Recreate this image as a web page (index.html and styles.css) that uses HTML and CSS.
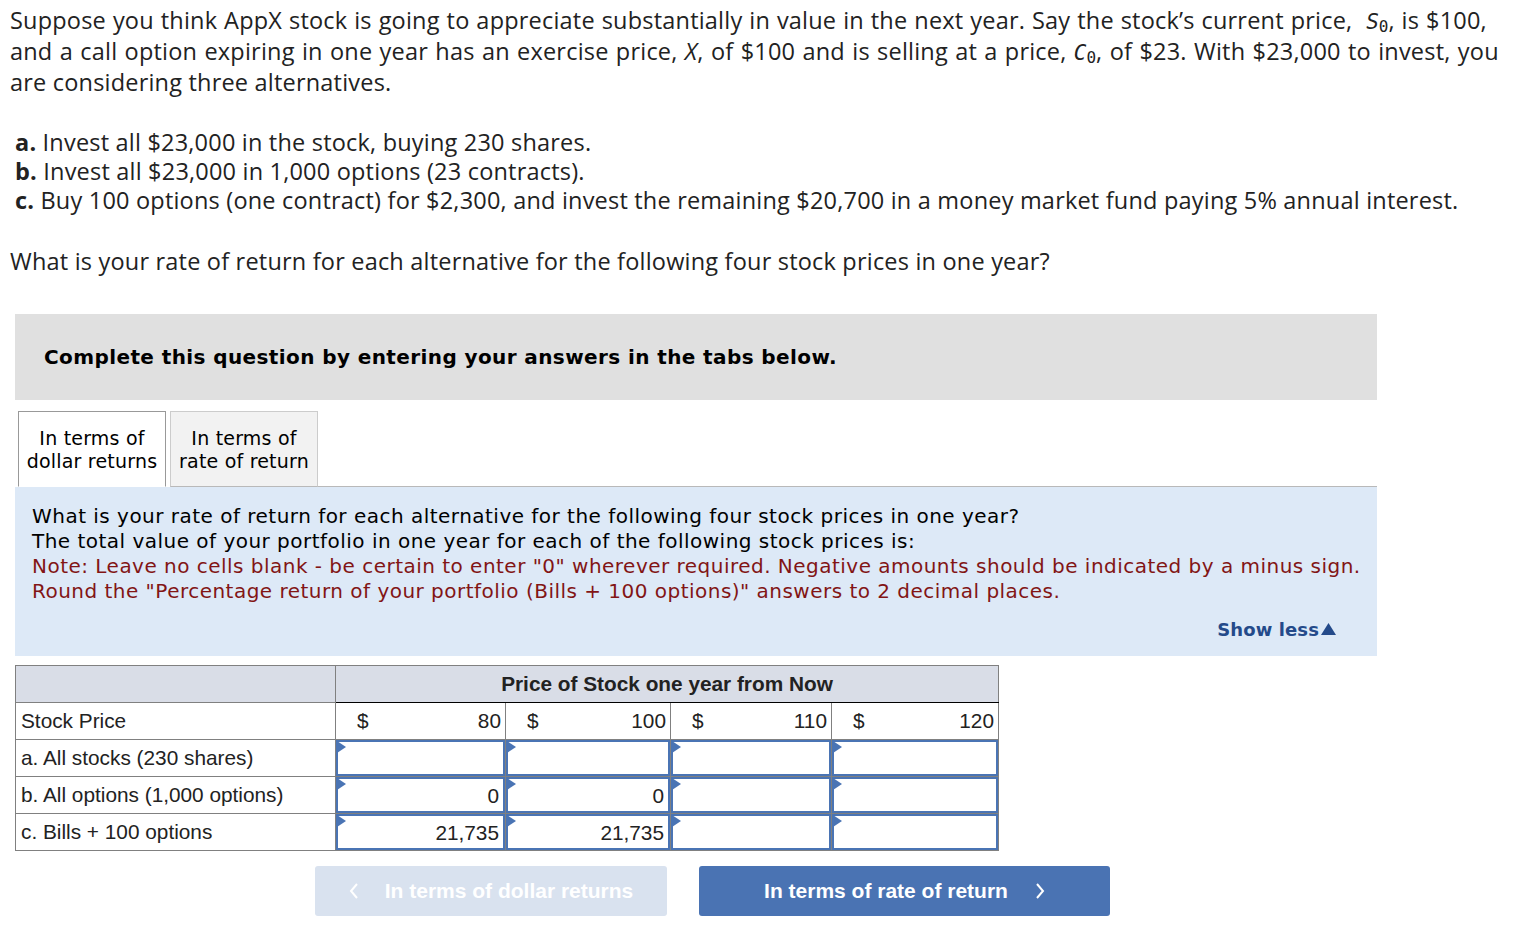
FILE: index.html
```html
<!DOCTYPE html>
<html>
<head>
<meta charset="utf-8">
<link rel="stylesheet" href="styles.css">
</head>
<body>
<div class="page">
  <div class="intro">
    <div class="line">Suppose you think AppX stock is going to appreciate substantially in value in the next year. Say the stock’s current price, &nbsp;<span class="var">S<span class="sub">0</span></span>, is $100,</div>
    <div class="line wide">and a call option expiring in one year has an exercise price, <i>X</i>, of $100 and is selling at a price, <span class="var">C<span class="sub">0</span></span>, of $23. With $23,000 to invest, you</div>
    <div class="line">are considering three alternatives.</div>
  </div>
  <div class="alts">
    <div class="line"><b>a.</b> Invest all $23,000 in the stock, buying 230 shares.</div>
    <div class="line"><b>b.</b> Invest all $23,000 in 1,000 options (23 contracts).</div>
    <div class="line"><b>c.</b> Buy 100 options (one contract) for $2,300, and invest the remaining $20,700 in a money market fund paying 5% annual interest.</div>
  </div>
  <p class="question">What is your rate of return for each alternative for the following four stock prices in one year?</p>

  <div class="banner">Complete this question by entering your answers in the tabs below.</div>

  <div class="tabs">
    <div class="tab active">In terms of<br>dollar returns</div>
    <div class="tab">In terms of<br>rate of return</div>
    <div class="tab-rest"></div>
  </div>

  <div class="panel">
    <div class="panel-text">
      <div>What is your rate of return for each alternative for the following four stock prices in one year?</div>
      <div>The total value of your portfolio in one year for each of the following stock prices is:</div>
      <div class="note">Note: Leave no cells blank - be certain to enter "0" wherever required. Negative amounts should be indicated by a minus sign.</div>
      <div class="note">Round the "Percentage return of your portfolio (Bills + 100 options)" answers to 2 decimal places.</div>
    </div>
    <div class="show-less">Show less<svg class="tri" width="15" height="12" viewBox="0 0 15 12"><polygon points="7.5,0 15,12 0,12" fill="#244a8a"/></svg></div>
  </div>

  <table class="grid">
    <colgroup>
      <col class="c-label"><col class="c-1"><col class="c-2"><col class="c-3"><col class="c-4">
    </colgroup>
    <tr class="head">
      <th></th>
      <th colspan="4">Price of Stock one year from Now</th>
    </tr>
    <tr class="prices">
      <td class="label">Stock Price</td>
      <td><span class="cur">$</span><span class="num">80</span></td>
      <td><span class="cur">$</span><span class="num">100</span></td>
      <td><span class="cur">$</span><span class="num">110</span></td>
      <td><span class="cur">$</span><span class="num">120</span></td>
    </tr>
    <tr>
      <td class="label">a. All stocks (230 shares)</td>
      <td class="in"><div class="box"></div></td>
      <td class="in"><div class="box"></div></td>
      <td class="in"><div class="box"></div></td>
      <td class="in"><div class="box"></div></td>
    </tr>
    <tr>
      <td class="label">b. All options (1,000 options)</td>
      <td class="in"><div class="box">0</div></td>
      <td class="in"><div class="box">0</div></td>
      <td class="in"><div class="box"></div></td>
      <td class="in"><div class="box"></div></td>
    </tr>
    <tr>
      <td class="label">c. Bills + 100 options</td>
      <td class="in"><div class="box">21,735</div></td>
      <td class="in"><div class="box">21,735</div></td>
      <td class="in"><div class="box"></div></td>
      <td class="in"><div class="box"></div></td>
    </tr>
  </table>

  <div class="nav">
    <div class="btn prev"><svg class="chev" width="10" height="18" viewBox="0 0 10 18"><polyline points="8,2 2,9 8,16" fill="none" stroke="#fff" stroke-width="2"/></svg>In terms of dollar returns</div>
    <div class="btn next">In terms of rate of return<svg class="chev" width="10" height="18" viewBox="0 0 10 18"><polyline points="2,2 8,9 2,16" fill="none" stroke="#fff" stroke-width="2"/></svg></div>
  </div>
</div>
</body>
</html>
```

FILE: styles.css
```css
* { box-sizing: border-box; }
body { margin: 0; background: #fff; color: #222; }
.page { padding: 5px 10px 0 10px; width: 1518px; }

.intro, .alts, .question {
  font-family: "Open Sans", Lato, sans-serif;
  font-size: 23.5px;
  letter-spacing: 0.2px;
  color: #222;
}
.line { white-space: nowrap; }
.intro .line:first-child { word-spacing: 0.6px; }
.intro .line.wide { word-spacing: 1px; }
.intro { line-height: 31px; }
.var { font-family: "DejaVu Sans Mono", monospace; font-style: italic; font-size: 21px; line-height: 20px; letter-spacing: 0; }
.var .sub { font-style: normal; font-size: 16px; position: relative; top: 3px; }

.alts {
  line-height: 29px;
  margin: 30px 0 0 5px;
}
.question {
  line-height: 31px;
  margin: 31px 0 0 0;
}

.banner {
  margin: 37px 0 0 5px;
  width: 1362px;
  height: 86px;
  background: #e0e0e0;
  font-family: "DejaVu Sans", Verdana, sans-serif;
  font-weight: bold;
  font-size: 20px;
  letter-spacing: 0.4px;
  color: #000;
  display: flex;
  align-items: center;
  padding-left: 29px;
}

.tabs {
  display: flex;
  margin: 11px 0 0 5px;
  width: 1362px;
  height: 76px;
  font-family: "DejaVu Sans", Verdana, sans-serif;
  font-size: 19px;
  letter-spacing: 0.2px;
  color: #000;
}
.tab {
  height: 76px;
  width: 148px;
  text-align: center;
  line-height: 23px;
  padding-top: 15px;
  border: 1px solid #ccc;
  border-bottom: 1px solid #b9b9b9;
  background: #f2f2f2;
  margin-right: 4px;
  white-space: nowrap;
}
.tab.active {
  background: #fff;
  border-color: #999;
  border-bottom: 1px solid #fff;
  margin-left: 3px;
}
.tab-rest { flex: 1; border-bottom: 1px solid #b9b9b9; margin-left: -4px; }

.panel {
  margin-left: 5px;
  width: 1362px;
  height: 169px;
  background: #dde9f7;
  padding: 17px 10px 0 17px;
  font-family: "DejaVu Sans", Verdana, sans-serif;
  font-size: 20px;
  letter-spacing: 0.48px;
  line-height: 25px;
  color: #000;
  display: flex;
  flex-direction: column;
}
.panel-text div { white-space: nowrap; }
.note { color: #821515; }
.show-less {
  align-self: flex-end;
  margin-top: 13px;
  margin-right: 31px;
  font-weight: bold;
  color: #244a8a;
  font-size: 18px;
  letter-spacing: 0.1px;
  display: flex;
  align-items: center;
}
.show-less .tri { margin-left: 2px; margin-top: -1px; }

.grid {
  margin: 9px 0 0 5px;
  border-collapse: collapse;
  font-family: "Liberation Sans", Arial, sans-serif;
  font-size: 20.8px;
  color: #222;
}
.c-label { width: 320px; }
.c-1 { width: 170px; }
.c-2 { width: 165px; }
.c-3 { width: 161px; }
.c-4 { width: 167px; }
.grid td, .grid th { border: 1px solid #808080; height: 37px; padding: 0; }
.grid tr.head th {
  background: #d9dde7;
  font-weight: bold;
  text-align: center;
  height: 37px;
}
.grid tr.head th + th { border-bottom: 1px solid #000; }
.grid td.label { padding-left: 5px; white-space: nowrap; }
.prices td { padding: 0 4px 0 21px; }
.prices td.label { padding-left: 5px; }
.prices .cur { float: left; }
.prices .num { float: right; }
.grid td.in { padding: 0; }
.box {
  height: 36px;
  border: 2px solid #4a74b4;
  text-align: right;
  padding: 3px 4px 0 0;
  line-height: 28px;
  position: relative;
}
.box::before {
  content: "";
  position: absolute;
  left: -1px;
  top: -1px;
  border-left: 9px solid #4a74b4;
  border-top: 6px solid transparent;
  border-bottom: 6px solid transparent;
}

.nav {
  display: flex;
  gap: 32px;
  margin: 15px 0 0 305px;
  font-family: "Liberation Sans", Arial, sans-serif;
  font-weight: bold;
  font-size: 21px;
  color: #fff;
}
.btn {
  height: 50px;
  border-radius: 3px;
  display: flex;
  align-items: center;
  justify-content: center;
}
.btn.prev { width: 352px; background: #d9e2ef; }
.btn.next { width: 411px; background: #4a73b3; }
.prev .chev { margin-right: 26px; }
.next .chev { margin-left: 27px; }
```
